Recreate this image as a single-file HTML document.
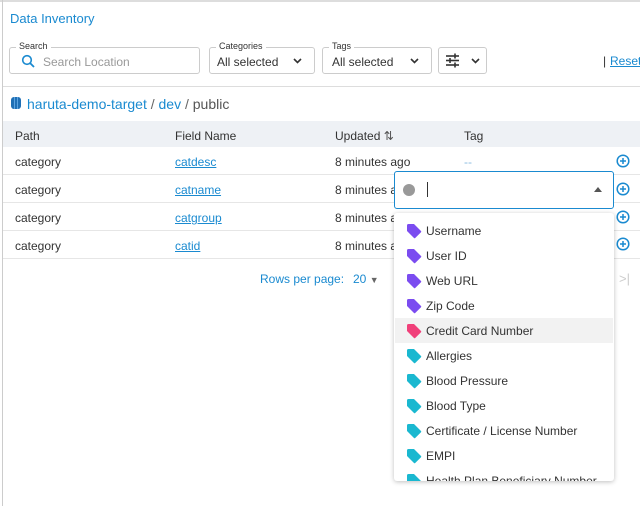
<!DOCTYPE html><html><head><style>
*{margin:0;padding:0;box-sizing:border-box}
body{width:640px;height:506px;position:relative;overflow:hidden;background:#fff;font-family:"Liberation Sans",sans-serif;color:#333;font-size:12px}
.a{position:absolute;white-space:nowrap}
.box{position:absolute;border:1px solid #ccc;border-radius:3px;height:27px;top:47px}
.lbl{position:absolute;top:-7px;left:6px;background:#fff;padding:0 3px;font-size:9px;color:#333}
.blue{color:#1a8ad0}
.lnk{color:#1a8ad0;text-decoration:underline}
.row{position:absolute;left:3px;right:0;height:28px;border-bottom:1px solid #e6e6e6}
.row span{position:absolute;top:8px}
.plus{position:absolute;left:616px}
.it{position:absolute;left:395px;width:218px;height:25px}
.it span{position:absolute;left:31px;top:6px;font-size:12px}
.tag{position:absolute;left:11px;top:5px}
</style></head><body>
<div class="a" style="left:0;top:0;width:640px;height:2px;background:#ddd"></div>
<div class="a" style="left:2px;top:0;width:1px;height:506px;background:#ccc"></div>
<div class="a blue" style="left:10px;top:11px;font-size:13px">Data Inventory</div>

<div class="box" style="left:9px;width:191px"><div class="lbl">Search</div>
<svg class="a" style="left:11px;top:6px" width="14" height="14"><circle cx="6" cy="6" r="4.3" stroke="#1a8ad0" stroke-width="1.6" fill="none"/><line x1="9" y1="9" x2="13" y2="13" stroke="#1a8ad0" stroke-width="1.8"/></svg>
<span class="a" style="left:33px;top:7px;color:#999">Search Location</span></div>
<div class="box" style="left:209px;width:106px"><div class="lbl">Categories</div><span class="a" style="left:7px;top:7px">All selected</span><svg class="a" style="left:83px;top:10px" width="9" height="6"><path d="M1 1 L4.5 4.5 L8 1" stroke="#333" stroke-width="1.6" fill="none"/></svg></div>
<div class="box" style="left:322px;width:110px"><div class="lbl">Tags</div><span class="a" style="left:9px;top:7px">All selected</span><svg class="a" style="left:87px;top:10px" width="9" height="6"><path d="M1 1 L4.5 4.5 L8 1" stroke="#333" stroke-width="1.6" fill="none"/></svg></div>
<div class="box" style="left:438px;width:49px">
<svg class="a" style="left:6px;top:5px" width="15" height="15" stroke="#333" stroke-width="1.6"><line x1="1" y1="3" x2="14" y2="3"/><line x1="1" y1="7.5" x2="14" y2="7.5"/><line x1="1" y1="12" x2="14" y2="12"/><line x1="10" y1="0.5" x2="10" y2="5.5"/><line x1="5" y1="5" x2="5" y2="10"/><line x1="10" y1="9.5" x2="10" y2="14.5"/></svg>
<svg class="a" style="left:32px;top:10px" width="9" height="6"><path d="M1 1 L4.5 4.5 L8 1" stroke="#333" stroke-width="1.6" fill="none"/></svg></div>
<span class="a" style="left:603px;top:54px">|</span><span class="a lnk" style="left:610px;top:54px">Reset</span>
<div class="a" style="left:3px;top:86px;width:637px;height:1px;background:#ddd"></div>

<svg class="a" style="left:11px;top:96px" width="10" height="14"><rect x="0" y="1" width="10" height="12" rx="3" fill="#1f6fb5"/><rect x="3" y="1" width="1" height="12" fill="#5ba3e0"/><rect x="6" y="1" width="1" height="12" fill="#5ba3e0"/></svg>
<div class="a" style="left:27px;top:96px;font-size:14px"><span class="blue">haruta-demo-target</span> <span style="color:#666">/</span> <span class="blue">dev</span> <span style="color:#666">/</span> <span style="color:#555">public</span></div>

<div class="a" style="left:3px;top:121px;width:637px;height:26px;background:#eef1f5"></div>
<span class="a" style="left:15px;top:129px">Path</span>
<span class="a" style="left:175px;top:129px">Field Name</span>
<span class="a" style="left:335px;top:129px">Updated <span style="color:#555">&#8645;</span></span>
<span class="a" style="left:464px;top:129px">Tag</span>

<div class="row" style="top:147px"><span style="left:12px">category</span><span class="lnk" style="left:172px">catdesc</span><span style="left:332px">8 minutes ago</span><span style="left:461px;color:#8bbce0">--</span></div>
<div class="row" style="top:175px"><span style="left:12px">category</span><span class="lnk" style="left:172px">catname</span><span style="left:332px">8 minutes a</span></div>
<div class="row" style="top:203px"><span style="left:12px">category</span><span class="lnk" style="left:172px">catgroup</span><span style="left:332px">8 minutes a</span></div>
<div class="row" style="top:231px"><span style="left:12px">category</span><span class="lnk" style="left:172px">catid</span><span style="left:332px">8 minutes a</span></div>
<svg class="plus" style="top:154px" width="14" height="14"><circle cx="7" cy="7" r="5.8" stroke="#1a8ad0" stroke-width="1.5" fill="none"/><path d="M4 7H10M7 4V10" stroke="#1a8ad0" stroke-width="1.5"/></svg>
<svg class="plus" style="top:182px" width="14" height="14"><circle cx="7" cy="7" r="5.8" stroke="#1a8ad0" stroke-width="1.5" fill="none"/><path d="M4 7H10M7 4V10" stroke="#1a8ad0" stroke-width="1.5"/></svg>
<svg class="plus" style="top:210px" width="14" height="14"><circle cx="7" cy="7" r="5.8" stroke="#1a8ad0" stroke-width="1.5" fill="none"/><path d="M4 7H10M7 4V10" stroke="#1a8ad0" stroke-width="1.5"/></svg>
<svg class="plus" style="top:237px" width="14" height="14"><circle cx="7" cy="7" r="5.8" stroke="#1a8ad0" stroke-width="1.5" fill="none"/><path d="M4 7H10M7 4V10" stroke="#1a8ad0" stroke-width="1.5"/></svg>

<span class="a blue" style="left:260px;top:272px">Rows per page:</span>
<span class="a blue" style="left:353px;top:272px">20 <span style="color:#666;font-size:9px">&#9660;</span></span>
<span class="a" style="left:619px;top:271px;color:#ccc;font-size:13px">&gt;|</span>

<div class="a" style="left:394px;top:171px;width:220px;height:38px;border:1.5px solid #1a8ad0;border-radius:3px;background:#fff">
<div class="a" style="left:8px;top:12px;width:12px;height:12px;border-radius:50%;background:#999"></div>
<div class="a" style="left:32px;top:10px;width:1px;height:15px;background:#333"></div>
<svg class="a" style="left:199px;top:15px" width="8" height="5"><path d="M0 5L4 0L8 5Z" fill="#555"/></svg></div>

<div class="a" style="left:394px;top:213px;width:220px;height:268px;background:#fff;border-radius:3px;box-shadow:0 1px 5px rgba(0,0,0,.25);overflow:hidden">
</div>
<div class="a" style="left:395px;top:318px;width:218px;height:25px;background:#f2f2f2"></div>
<div id="items"></div>
<script>
var L=[["Username","#7b4cf0"],["User ID","#7b4cf0"],["Web URL","#7b4cf0"],["Zip Code","#7b4cf0"],["Credit Card Number","#f0407a"],["Allergies","#1ab8d0"],["Blood Pressure","#1ab8d0"],["Blood Type","#1ab8d0"],["Certificate / License Number","#1ab8d0"],["EMPI","#1ab8d0"],["Health Plan Beneficiary Number","#1ab8d0"]];
var h="";L.forEach(function(x,i){var t=218+i*25;var clip=i==10?"height:13px;overflow:hidden;":"";
h+='<div class="it" style="top:'+t+'px;'+clip+'"><svg class="tag" width="16" height="16"><path d="M1 2.5 Q1 1 2.5 1 H8 L15 8 Q15.6 8.6 15 9.2 L9.2 15 Q8.6 15.6 8 15 L1 8 Z" fill="'+x[1]+'"/></svg><span>'+x[0]+'</span></div>';});
document.getElementById("items").innerHTML=h;
</script>
</body></html>
